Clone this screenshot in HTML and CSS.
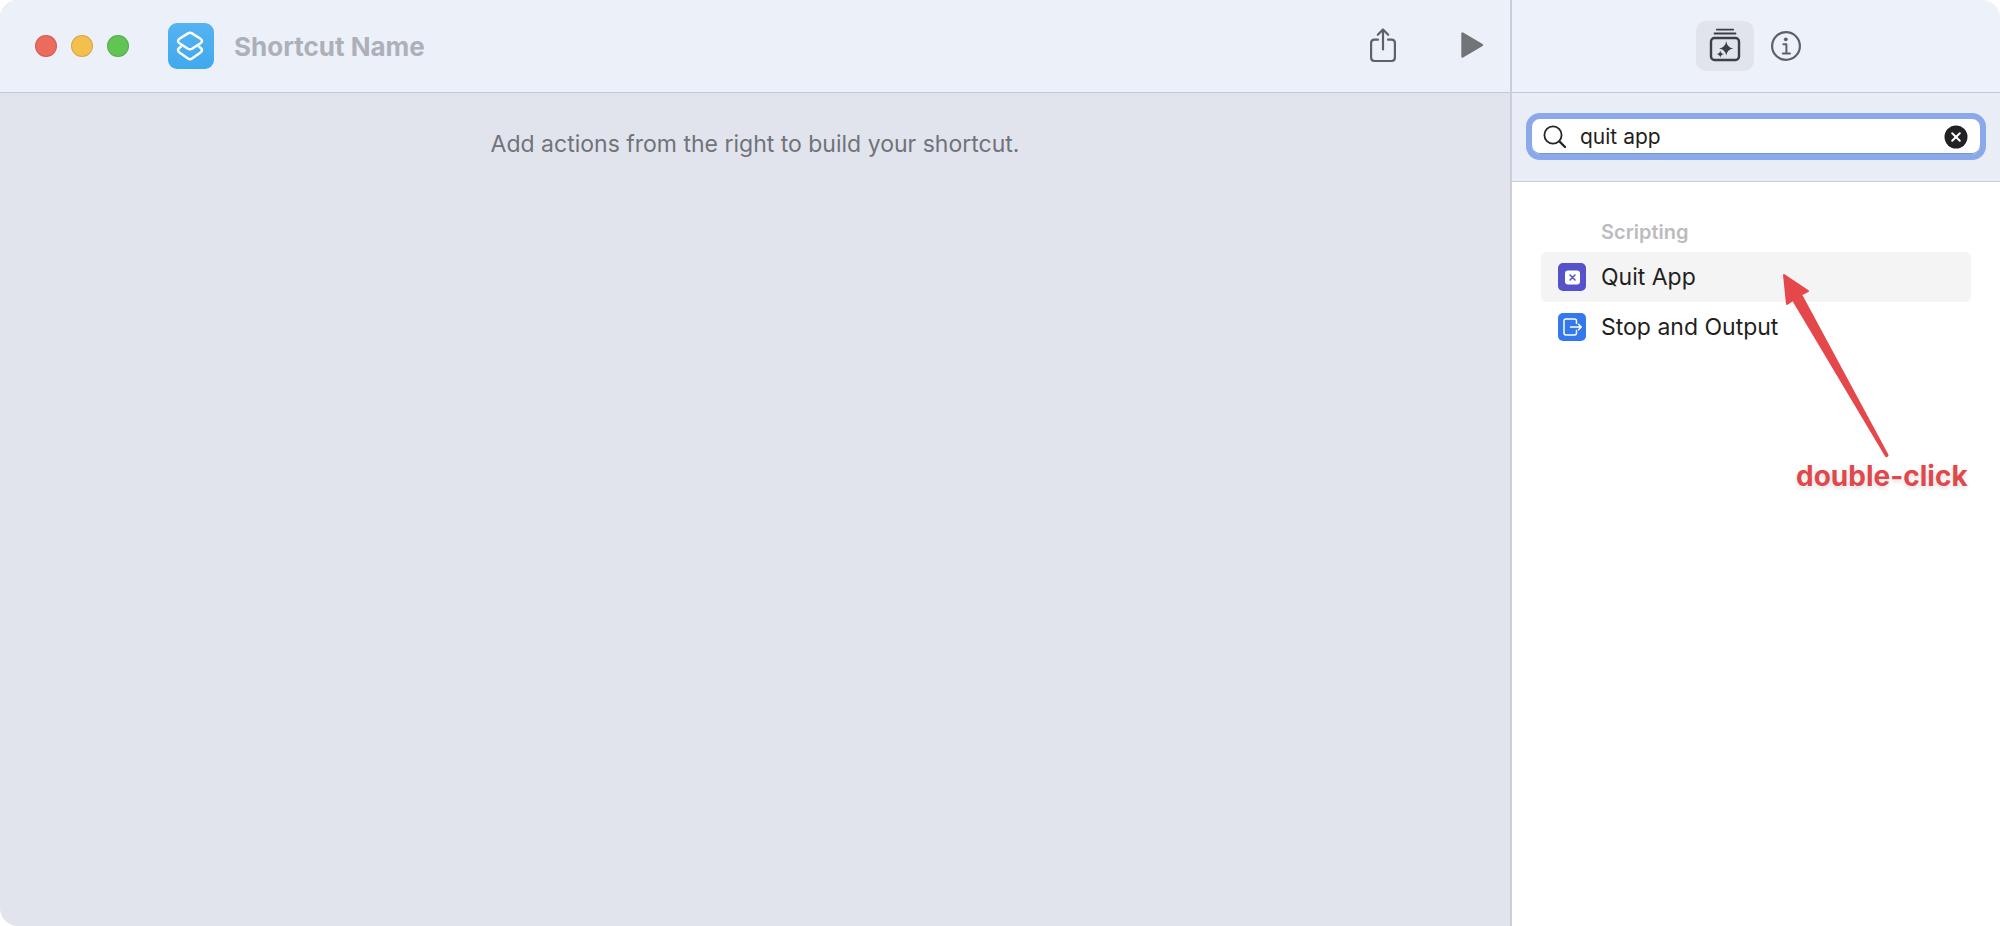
FILE: index.html
```html
<!DOCTYPE html>
<html lang="en">

<head>
<meta charset="utf-8">
<title>Shortcut Name</title>

<link rel="stylesheet" href="styles.css">
</head>

<body>

<div class="window">
  <main class="editor">
    <header class="toolbar">
      <div class="lights">
        <button type="button" class="light close" aria-label="Close"></button>
        <button type="button" class="light minimize" aria-label="Minimize"></button>
        <button type="button" class="light zoom" aria-label="Zoom"></button>
      </div>
      <button type="button" class="app-icon" aria-label="Choose icon">
        <svg width="46" height="46" viewBox="0 0 46 46" fill="none" stroke="#fff" stroke-width="2.5" stroke-linejoin="round">
          <path d="M20 10.4q2-1.2 4 0l8.200 5.100q3.600 2.500 0 5L24 25.700q-2 1.200-4 0l-8.200-5.200q-3.600-2.500 0-5z"/>
          <path d="M13.500 23.200l-1.700 1.200q-3.600 2.700 0 5.400L20 35.600q2 1.400 4 0l8.200-5.800q3.600-2.700 0-5.400l-1.700-1.200"/>
        </svg>
      </button>
      <h1 class="title">Shortcut Name</h1>
      <div class="tools">
        <button type="button" class="tool" aria-label="Share">
          <svg width="30" height="36" viewBox="0 0 30 36" fill="none" stroke="#5e6167" stroke-width="2.2" stroke-linecap="round" stroke-linejoin="round">
            <path d="M10 12.700H6.500q-3.400 0-3.400 3.400v14.500q0 3.400 3.400 3.400h17q3.400 0 3.400-3.400V16.100q0-3.400-3.400-3.400H20"/>
            <path d="M15 22.500V3M9.800 7.800L15 2.500l5.200 5.300"/>
          </svg>
        </button>
        <button type="button" class="tool" aria-label="Run">
          <svg width="24" height="28" viewBox="0 0 24 28">
            <path d="M2.500 2.500v23L22 14z" fill="#727578" stroke="#727578" stroke-width="2.400" stroke-linejoin="round"/>
          </svg>
        </button>
      </div>
    </header>
    <p class="hint">Add actions from the right to build your shortcut.</p>
  </main>

  <aside class="sidebar">
    <nav class="tabs">
      <button type="button" class="tab active" aria-label="Action library">
        <svg width="32" height="34" viewBox="0 0 32 34" fill="none" stroke="#3d3f47" stroke-linecap="round">
          <path d="M7.800 1.600h16.400M5.500 5.500h21" stroke-width="1.800"/>
          <rect x="2" y="10" width="28" height="22" rx="3.500" stroke-width="2.400"/>
          <path d="M17.200 13.200q.9 6.300 7.100 7.200q-6.200.9-7.100 7.200q-.9-6.300-7.100-7.200q6.200-.9 7.100-7.200z" fill="#3d3f47" stroke="none"/>
          <path d="M11.300 22.400q.5 3.200 3.700 3.700q-3.200.5-3.700 3.700q-.5-3.200-3.700-3.700q3.200-.5 3.700-3.700z" fill="#3d3f47" stroke="none"/>
        </svg>
      </button>
      <button type="button" class="tab" aria-label="Shortcut details">
        <svg width="32" height="32" viewBox="0 0 32 32" fill="none" stroke="#5e6067" stroke-width="2.200" stroke-linecap="round" stroke-linejoin="round">
          <circle cx="16" cy="16" r="13.900"/>
          <circle cx="15.800" cy="9.300" r="1.900" fill="#5e6067" stroke="none"/>
          <path d="M13.400 14.200h3v9.200M12.800 23.400h7.200" stroke-width="2"/>
        </svg>
      </button>
    </nav>

    <div class="search-bar">
      <label class="search">
        <svg width="24" height="24" viewBox="0 0 24 24" fill="none" stroke="#252527" stroke-linecap="round">
          <circle cx="10" cy="10" r="8.600" stroke-width="1.800"/>
          <path d="M16.500 16.500l5.500 5.500" stroke-width="2.400"/>
        </svg>
        <input type="text" class="search-input" value="quit app" aria-label="Search actions">
        <button type="button" class="clear" aria-label="Clear search">
          <svg width="24" height="24" viewBox="0 0 24 24">
            <circle cx="12" cy="12" r="11.500" fill="#222224"/>
            <path d="M8.200 8.200l7.600 7.600M15.800 8.200l-7.600 7.600" stroke="#fff" stroke-width="2" stroke-linecap="round"/>
          </svg>
        </button>
      </label>
    </div>

    <section class="results">
      <h2 class="category">Scripting</h2>
      <ul class="actions">
        <li>
          <button type="button" class="action selected">
            <svg width="28" height="28" viewBox="0 0 28 28">
              <rect width="28" height="28" rx="5" fill="#5552ca"/>
              <rect x="7" y="7.500" width="15" height="14" rx="3" fill="#fff"/>
              <path d="M12 12l5 5M17 12l-5 5" stroke="#5552ca" stroke-width="1.500" stroke-linecap="round"/>
            </svg>
            Quit App
          </button>
        </li>
        <li>
          <button type="button" class="action">
            <svg width="28" height="28" viewBox="0 0 28 28">
              <rect width="28" height="28" rx="5" fill="#3478ee"/>
              <path d="M18.500 10.500V8q0-2-2-2H8Q6 6 6 8v12q0 2 2 2h8.500q2 0 2-2v-2.500M12.500 14h10.500M20.500 11.300l2.700 2.700-2.700 2.700" fill="none" stroke="#fff" stroke-width="1.500" stroke-linecap="round" stroke-linejoin="round"/>
            </svg>
            Stop and Output
          </button>
        </li>
      </ul>

      <div class="note">
        <svg class="arrow" width="112" height="186" viewBox="0 0 112 186">
          <path d="M4 2l24 16-7 3.500L107.500 182q-.3 1.500-1.500 1L13 27l-6 4z" fill="#e5484b" stroke="#e5484b" stroke-width="2" stroke-linejoin="round"/>
        </svg>
        <span class="note-text">double-click</span>
      </div>
    </section>
  </aside>
</div>

</body>
</html>
```
FILE: styles.css
```css
* {
  box-sizing: border-box;
}

body {
  margin: 0;
  background: #fff;
  font-family: Inter, "Liberation Sans", sans-serif;
  font-size: 23px;
  color: #1f1f21;
}

button {
  padding: 0;
  border: 0;
  background: none;
  font: inherit;
  color: inherit;
}

svg {
  display: block;
  flex: none;
}

.window {
  display: grid;
  grid-template-columns: 1fr 490px;
  min-height: 100vh;
  border-radius: 18px;
  overflow: hidden;
}

/* editor */

.editor {
  background: #e1e4ec;
}

.toolbar {
  display: flex;
  align-items: center;
  height: 93px;
  padding: 0 26px 0 35px;
  border-bottom: 1px solid #c3c7d1;
  background: #ecf0f8;
}

.lights {
  display: flex;
  gap: 14px;
}

.light {
  width: 22px;
  height: 22px;
  border: 1px solid rgba(0, 0, 0, 0.12);
  border-radius: 50%;
}

.close {
  background: #ed6a5e;
}

.minimize {
  background: #f5bf4f;
}

.zoom {
  background: #61c554;
}

.app-icon {
  margin-left: 39px;
  border-radius: 9px;
  background: linear-gradient(#55b3f1, #40a9ee);
}

.title {
  margin: 0 0 0 20px;
  font-size: 26px;
  font-weight: 700;
  color: #adb0b8;
}

.tools {
  display: flex;
  align-items: center;
  gap: 62px;
  margin-left: auto;
  padding-bottom: 2px;
}

.hint {
  margin: 0;
  padding: 37px 20px;
  font-size: 23px;
  line-height: 28px;
  text-align: center;
  color: #70737a;
}

/* sidebar */

.sidebar {
  border-left: 2px solid #cbced8;
  background: #fff;
}

.tabs {
  display: flex;
  align-items: center;
  justify-content: center;
  gap: 16px;
  height: 93px;
  padding-right: 14px;
  border-bottom: 1px solid #c6cad4;
  background: #edf1fa;
}

.tab.active {
  padding: 7px 13px 9px;
  border-radius: 10px;
  background: #e1e4ec;
}

.search-bar {
  padding: 20px 14px 21px;
  border-bottom: 1px solid #cacdd4;
  background: #e9edf5;
}

.search {
  display: flex;
  align-items: center;
  gap: 13px;
  height: 47px;
  padding: 0 12px 0 11px;
  border: 6px solid #8ba8eb;
  border-radius: 14px;
  background: #fff;
  box-shadow: inset 0 -1px #7d95d0;
}

.search-input {
  flex: 1;
  min-width: 0;
  padding: 0;
  border: 0;
  outline: none;
  background: none;
  font: inherit;
  font-size: 21px;
  color: inherit;
}

.results {
  position: relative;
  padding: 37px 29px;
}

.category {
  margin: 0;
  padding-left: 60px;
  font-size: 20px;
  font-weight: 600;
  line-height: 26px;
  color: #bcbcbe;
}

.actions {
  margin: 7px 0 0;
  padding: 0;
  list-style: none;
}

.action {
  display: flex;
  align-items: center;
  gap: 15px;
  width: 100%;
  height: 50px;
  padding: 0 17px;
  border-radius: 6px;
  text-align: left;
}

.action.selected {
  background: #f4f4f4;
}

/* note over the list */

.note {
  position: absolute;
  top: 91px;
  left: 268px;
  display: flex;
  flex-direction: column;
  pointer-events: none;
}

.note-text {
  padding-left: 16px;
  font-size: 28px;
  font-weight: 700;
  line-height: 34px;
  color: #e0484c;
  text-shadow: 0 0 3px #fff, 0 2px 4px rgba(0, 0, 0, 0.16);
}
```
